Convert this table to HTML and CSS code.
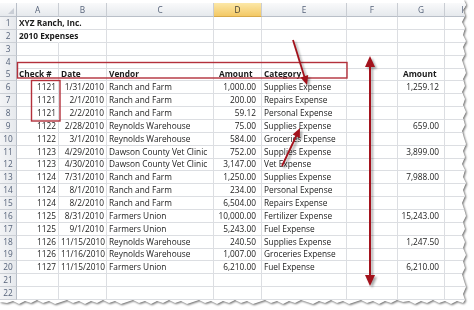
FILE: index.html
```html
<!DOCTYPE html>
<html lang="en">
<head>
<meta charset="utf-8">
<title>2010 Expenses</title>
<link rel="stylesheet" href="styles.css">
</head>
<body>
<div class="paper">
  <div class="torn">
    <div class="sheet">
      <div class="row hdr">
        <div class="corner"></div>
        <div class="ch">A</div><div class="ch">B</div><div class="ch">C</div><div class="ch sel">D</div>
        <div class="ch">E</div><div class="ch">F</div><div class="ch">G</div><div class="ch">H</div>
      </div>
      <div class="row"><div class="rh">1</div><div class="b spill">XYZ Ranch, Inc.</div><div></div><div></div><div></div><div></div><div></div><div></div><div></div></div>
      <div class="row"><div class="rh">2</div><div class="b spill">2010 Expenses</div><div></div><div></div><div></div><div></div><div></div><div></div><div></div></div>
      <div class="row"><div class="rh">3</div><div></div><div></div><div></div><div></div><div></div><div></div><div></div><div></div></div>
      <div class="row"><div class="rh">4</div><div></div><div></div><div></div><div></div><div></div><div></div><div></div><div></div></div>
      <div class="row"><div class="rh">5</div><div class="b">Check #</div><div class="b">Date</div><div class="b">Vendor</div><div class="b ind">Amount</div><div class="b">Category</div><div></div><div class="b ind">Amount</div><div></div></div>
      <div class="row"><div class="rh">6</div><div class="n">1121</div><div class="n">1/31/2010</div><div>Ranch and Farm</div><div class="n m">1,000.00</div><div>Supplies Expense</div><div></div><div class="n m">1,259.12</div><div></div></div>
      <div class="row"><div class="rh">7</div><div class="n">1121</div><div class="n">2/1/2010</div><div>Ranch and Farm</div><div class="n m">200.00</div><div>Repairs Expense</div><div></div><div></div><div></div></div>
      <div class="row"><div class="rh">8</div><div class="n">1121</div><div class="n">2/2/2010</div><div>Ranch and Farm</div><div class="n m">59.12</div><div>Personal Expense</div><div></div><div></div><div></div></div>
      <div class="row"><div class="rh">9</div><div class="n">1122</div><div class="n">2/28/2010</div><div>Reynolds Warehouse</div><div class="n m">75.00</div><div>Supplies Expense</div><div></div><div class="n m">659.00</div><div></div></div>
      <div class="row"><div class="rh">10</div><div class="n">1122</div><div class="n">3/1/2010</div><div>Reynolds Warehouse</div><div class="n m">584.00</div><div>Groceries Expense</div><div></div><div></div><div></div></div>
      <div class="row"><div class="rh">11</div><div class="n">1123</div><div class="n">4/29/2010</div><div>Dawson County Vet Clinic</div><div class="n m">752.00</div><div>Supplies Expense</div><div></div><div class="n m">3,899.00</div><div></div></div>
      <div class="row"><div class="rh">12</div><div class="n">1123</div><div class="n">4/30/2010</div><div>Dawson County Vet Clinic</div><div class="n m">3,147.00</div><div>Vet Expense</div><div></div><div></div><div></div></div>
      <div class="row"><div class="rh">13</div><div class="n">1124</div><div class="n">7/31/2010</div><div>Ranch and Farm</div><div class="n m">1,250.00</div><div>Supplies Expense</div><div></div><div class="n m">7,988.00</div><div></div></div>
      <div class="row"><div class="rh">14</div><div class="n">1124</div><div class="n">8/1/2010</div><div>Ranch and Farm</div><div class="n m">234.00</div><div>Personal Expense</div><div></div><div></div><div></div></div>
      <div class="row"><div class="rh">15</div><div class="n">1124</div><div class="n">8/2/2010</div><div>Ranch and Farm</div><div class="n m">6,504.00</div><div>Repairs Expense</div><div></div><div></div><div></div></div>
      <div class="row"><div class="rh">16</div><div class="n">1125</div><div class="n">8/31/2010</div><div>Farmers Union</div><div class="n m">10,000.00</div><div>Fertilizer Expense</div><div></div><div class="n m">15,243.00</div><div></div></div>
      <div class="row"><div class="rh">17</div><div class="n">1125</div><div class="n">9/1/2010</div><div>Farmers Union</div><div class="n m">5,243.00</div><div>Fuel Expense</div><div></div><div></div><div></div></div>
      <div class="row"><div class="rh">18</div><div class="n">1126</div><div class="n">11/15/2010</div><div>Reynolds Warehouse</div><div class="n m">240.50</div><div>Supplies Expense</div><div></div><div class="n m">1,247.50</div><div></div></div>
      <div class="row"><div class="rh">19</div><div class="n">1126</div><div class="n">11/16/2010</div><div>Reynolds Warehouse</div><div class="n m">1,007.00</div><div>Groceries Expense</div><div></div><div></div><div></div></div>
      <div class="row"><div class="rh">20</div><div class="n">1127</div><div class="n">11/15/2010</div><div>Farmers Union</div><div class="n m">6,210.00</div><div>Fuel Expense</div><div></div><div class="n m">6,210.00</div><div></div></div>
      <div class="row"><div class="rh">21</div><div></div><div></div><div></div><div></div><div></div><div></div><div></div><div></div></div>
      <div class="row"><div class="rh">22</div><div></div><div></div><div></div><div></div><div></div><div></div><div></div><div></div></div>
    </div>

    <!-- callouts drawn over the sheet -->
    <svg class="marks" viewBox="0 0 474 310" width="474" height="310">
      <g class="boxes" fill="none" stroke="#b3303b" stroke-width="1.4">
        <rect x="17.5" y="62.5" width="329.5" height="15.5"/>
        <rect x="31.5" y="80.5" width="28.5" height="40.5"/>
      </g>
      <g class="arrows" fill="#a3121c" stroke="#a3121c">
        <line x1="293" y1="40" x2="304.5" y2="77" stroke-width="1.8"/>
        <polygon points="307,85 308.2,75 300.6,77.4" stroke="none"/>
        <line x1="282" y1="166" x2="296.5" y2="135.5" stroke-width="1.8"/>
        <polygon points="300,128 299.8,138 292.6,134.4" stroke="none"/>
        <line x1="370" y1="64" x2="370" y2="278" stroke-width="2"/>
        <polygon points="370,56 375,67 365,67" stroke="none"/>
        <polygon points="370,286 375,275 365,275" stroke="none"/>
      </g>
    </svg>
  </div>
</div>
</body>
</html>
```

FILE: styles.css
```css
body {
  margin: 0;
  background: #fff;
}

/* torn-paper frame with a soft shadow along the ragged edge */
.paper {
  width: 474px;
  height: 310px;
  filter: drop-shadow(1px 1px 1px rgba(0, 0, 0, 0.6));
}

.torn {
  position: relative;
  width: 474px;
  height: 310px;
  box-sizing: border-box;
  padding-top: 3px;
  background: #fff;
  overflow: hidden;
  clip-path: polygon(
    0 0, 464px 0, 466px 5px, 463px 10px, 465px 16px, 462px 22px, 465px 28px, 463px 35px,
    466px 41px, 463px 47px, 465px 54px, 462px 60px, 464px 66px, 466px 73px, 463px 79px,
    465px 86px, 462px 92px, 465px 99px, 463px 105px, 466px 112px, 463px 118px, 465px 125px,
    462px 131px, 464px 138px, 466px 144px, 463px 151px, 465px 157px, 462px 164px, 465px 170px,
    463px 177px, 466px 183px, 463px 190px, 465px 196px, 462px 203px, 464px 209px, 466px 216px,
    463px 222px, 465px 229px, 462px 235px, 465px 242px, 463px 248px, 466px 255px, 463px 261px,
    465px 268px, 462px 274px, 464px 281px, 466px 287px, 463px 294px, 465px 300px, 463px 303px,
    457px 301px, 451px 304px, 445px 301px, 439px 303px, 433px 300px, 427px 303px, 421px 301px,
    415px 304px, 409px 301px, 403px 302px, 397px 300px, 391px 303px, 385px 301px, 379px 304px,
    373px 301px, 367px 303px, 361px 300px, 355px 302px, 349px 304px, 343px 301px, 337px 303px,
    331px 300px, 325px 303px, 319px 301px, 313px 304px, 307px 302px, 301px 300px, 295px 303px,
    289px 301px, 283px 304px, 277px 301px, 271px 303px, 265px 300px, 259px 302px, 253px 304px,
    247px 301px, 241px 303px, 235px 300px, 229px 303px, 223px 301px, 217px 304px, 211px 301px,
    205px 303px, 199px 300px, 193px 302px, 187px 304px, 181px 301px, 175px 303px, 169px 300px,
    163px 303px, 157px 301px, 151px 304px, 145px 301px, 139px 303px, 133px 300px, 127px 302px,
    121px 304px, 115px 301px, 109px 303px, 103px 300px, 97px 303px, 91px 301px, 85px 304px,
    79px 301px, 73px 303px, 67px 300px, 61px 302px, 55px 304px, 49px 301px, 43px 303px,
    37px 300px, 31px 303px, 25px 301px, 19px 304px, 13px 301px, 7px 303px, 0 302px
  );
}

/* worksheet grid */
.sheet {
  display: flex;
  flex-direction: column;
  font-family: "Open Sans", Lato, sans-serif;
  font-size: 8.3px;
  color: #1b1b1b;
}

.row {
  display: grid;
  grid-template-columns: 17px 42px 48px 107px 48px 85px 51px 47px 40px;
  height: 12.86px;
  flex: none;
}

.row > div {
  box-sizing: border-box;
  border-right: 1px solid #dcdee2;
  border-bottom: 1px solid #dcdee2;
  padding: 0 2px;
  white-space: nowrap;
  line-height: 12px;
  overflow: visible;
}

.row > .b { font-weight: 700; }
.row > .n { text-align: right; }
.row > .m { padding-right: 5px; }
.row > .ind { padding-left: 5px; }
.row > .spill { border-right-color: transparent; }

/* column and row headings */
.row.hdr { height: 14px; }

.row > .ch {
  background: linear-gradient(#f9fafb, #e6e9ed);
  border-right-color: #c9cdd3;
  border-bottom-color: #b9bfc8;
  color: #56637a;
  text-align: center;
  line-height: 13px;
}

.row > .ch.sel {
  background: linear-gradient(#fce8a8, #f3c865);
  border-bottom-color: #d6a94b;
  color: #3e3a30;
}

.row > .corner {
  position: relative;
  background: linear-gradient(#f9fafb, #e6e9ed);
  border-right-color: #b9bfc8;
  border-bottom-color: #b9bfc8;
}

.corner::after {
  content: "";
  position: absolute;
  right: 2px;
  bottom: 2px;
  border-left: 6px solid transparent;
  border-bottom: 6px solid #c9ced6;
}

.row > .rh {
  background: linear-gradient(90deg, #f3f4f6, #e6e9ed);
  border-right-color: #b9bfc8;
  border-bottom-color: #ccd0d6;
  color: #56637a;
  text-align: center;
  padding: 0;
}

/* red callouts */
.marks {
  position: absolute;
  left: 0;
  top: 0;
  pointer-events: none;
}

.marks .arrows {
  filter: drop-shadow(2px 2px 1.2px rgba(0, 0, 0, 0.35));
}
```
